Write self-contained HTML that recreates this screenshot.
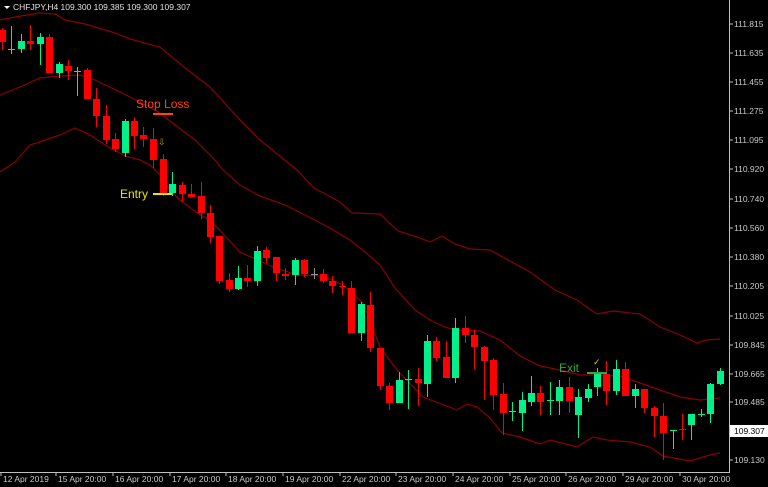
<!DOCTYPE html>
<html><head><meta charset="utf-8"><style>
html,body{margin:0;padding:0;background:#000;}
body{width:768px;height:487px;overflow:hidden;position:relative;font-family:"Liberation Sans",sans-serif;}
svg{position:absolute;left:0;top:0;}
</style></head><body>
<svg id="c" width="768" height="487" xmlns="http://www.w3.org/2000/svg">
<rect width="768" height="487" fill="#000"/>
<g id="bands" fill="none" stroke="#8b0000" stroke-width="1.2">
<polyline points="0,20 15,17 40,13 55,14 65,20 85,24 115,33 130,39 160,47 185,68 210,87 240,120 260,140 297,170 314,188 340,202 352,213 380,214 398,231 417,237 430,242 442,236 455,244 470,249 490,250 530,272 555,290 577,300 597,314 613,311 640,314 660,327 680,335 697,343 706,340 720,339"/>
<polyline points="0,95 20,87 40,78 60,76 80,75 95,80 120,92 140,102 160,113 175,125 195,140 215,160 223,170 240,185 260,196 285,205 305,215 330,228 350,240 365,252 380,265 395,288 415,310 430,320 445,327 455,330 480,331 500,340 520,356 540,366 560,370 580,375 600,375 620,376 640,383 660,390 680,397 700,400 720,398"/>
<polyline points="0,172 15,162 30,145 45,140 60,135 75,128 90,135 110,148 125,156 140,160 150,165 160,175 170,190 180,200 200,215 210,220 240,252 273,267 297,275 323,276 343,285 363,303 380,347 397,370 423,397 457,410 467,404 477,407 490,418 502,433 520,437 540,444 550,440 577,447 593,437 607,440 630,442 650,447 663,456 690,461 710,455 720,453"/>
</g>
<g id="candles"></g>
<line x1="729.5" y1="0" x2="729.5" y2="472" stroke="#c0c0c0"/>
<line x1="0" y1="472.5" x2="730" y2="472.5" stroke="#c0c0c0"/>
<g id="axis" fill="#c8c8c8" font-size="8.5" font-family="Liberation Sans, sans-serif"></g>
<text x="136" y="108" fill="#ff4500" font-size="12">Stop Loss</text>
<line x1="153" y1="114" x2="173" y2="114" stroke="#ff4500" stroke-width="2"/>
<text x="120" y="198" fill="#e6e600" font-size="12">Entry</text>
<line x1="153" y1="194" x2="172" y2="194" stroke="#e6e600" stroke-width="2"/>
<text x="559" y="372" fill="#2eaa3a" font-size="12">Exit</text>
<line x1="587" y1="373" x2="607" y2="373" stroke="#2eaa3a" stroke-width="2"/>
<text x="593" y="365" fill="#d4d400" font-size="9">✓</text>
<text x="158" y="145" fill="#b8a000" font-size="9">⇩</text>
<polygon points="4,6 10,6 7,9" fill="#fff"/>
<text x="13" y="10" fill="#e0e0e0" font-size="8.5">CHFJPY,H4  109.300 109.385 109.300 109.307</text>
</svg>
<script>
var d=[
[2,30,42,28,50,0],[11,49,49,26,54,1],[21,49,41,34,53,1],[30,41,44,25,50,0],[40,44,37,33,65,1],
[49,37,73,34,73,0],[59,73,64,62,78,1],[68,66,71,60,80,0],[77,71,71,67,96,1],[87,70,99,68,99,0],
[96,99,116,88,127,0],[106,116,140,105,144,0],[115,139,149,133,152,0],[125,153,121,119,157,1],[134,121,136,117,149,0],
[143,135,139,127,147,0],[153,139,160,128,168,0],[163,159,193,154,196,0],[172,193,184,172,196,1],[182,185,194,182,201,0],
[191,194,197,184,198,0],[201,196,213,182,219,0],[210,213,237,205,243,0],[219,236,281,236,284,0],[229,280,289,273,292,0],
[238,289,278,266,290,1],[247,278,281,265,287,0],[257,281,251,246,286,1],[266,250,258,247,263,0],[276,257,273,257,281,0],
[285,274,276,268,280,0],[295,275,260,258,285,1],[304,260,274,259,277,0],[314,274,274,268,279,2],[323,274,281,269,283,0],
[332,281,286,276,293,0],[342,286,287,281,295,0],[351,288,333,281,333,0],[361,333,304,302,341,1],[370,305,348,292,352,0],
[380,348,386,348,390,0],[389,386,403,383,410,0],[399,403,380,372,403,1],[408,379,379,370,409,1],[418,379,383,368,406,0],
[427,384,341,335,397,1],[436,341,358,337,361,0],[446,357,378,341,378,0],[455,378,328,318,383,1],[465,328,335,316,343,0],
[474,335,347,330,369,0],[484,347,361,346,400,0],[493,360,395,358,410,0],[503,394,413,383,435,0],[512,411,411,402,421,1],
[522,413,400,392,431,1],[531,402,393,376,406,1],[540,393,402,386,415,0],[550,400,400,382,415,1],[559,401,387,380,415,1],
[569,387,401,377,413,0],[578,415,397,389,438,1],[588,398,389,384,402,1],[597,387,373,368,396,1],[606,374,391,361,405,0],
[616,391,369,360,395,1],[625,369,396,362,396,0],[635,396,389,384,408,1],[644,389,408,389,413,0],[654,408,416,406,437,0],
[663,416,433,403,460,0],[673,430,430,430,449,1],[682,429,429,414,440,0],[691,425,414,414,440,1],[701,414,414,409,417,1],
[710,414,384,383,423,1],[720,384,371,368,385,1]];
var s='';
d.forEach(function(c){var x=c[0],col=c[5]==0?'#ff0000':(c[5]==1?'#00f08a':'#909090');
var t=Math.min(c[1],c[2]),b=Math.max(c[1],c[2]);if(b-t<1)b=t+1;
s+='<rect x="'+(x)+'" y="'+c[3]+'" width="1" height="'+(c[4]-c[3])+'" fill="'+col+'"/>';
s+='<rect x="'+(x-3)+'" y="'+t+'" width="7" height="'+(b-t)+'" fill="'+col+'"/>';});
document.getElementById('candles').innerHTML=s;
var p=[['111.815',24],['111.635',53],['111.455',82],['111.275',111],['111.095',140],['110.920',169],['110.740',199],['110.560',228],['110.380',257],['110.205',286],['110.025',316],['109.845',345],['109.665',374],['109.485',402],['109.130',460]];
var a='';
p.forEach(function(q){a+='<line x1="729" y1="'+q[1]+'" x2="733" y2="'+q[1]+'" stroke="#c0c0c0"/><text x="734" y="'+(q[1]+3)+'">'+q[0]+'</text>';});
a+='<rect x="730" y="425" width="38" height="12" fill="#fff"/><text x="734" y="434" fill="#000">109.307</text>';
var dt=[['12 Apr 2019',3],['15 Apr 20:00',58],['16 Apr 20:00',115],['17 Apr 20:00',172],['18 Apr 20:00',228],['19 Apr 20:00',285],['22 Apr 20:00',342],['23 Apr 20:00',398],['24 Apr 20:00',455],['25 Apr 20:00',512],['26 Apr 20:00',568],['29 Apr 20:00',625],['30 Apr 20:00',682]];
dt.forEach(function(q){a+='<line x1="'+(q[1]-2)+'" y1="472" x2="'+(q[1]-2)+'" y2="476" stroke="#c0c0c0"/><text x="'+q[1]+'" y="482">'+q[0]+'</text>';});
document.getElementById('axis').innerHTML=a;
</script>
</body></html>
